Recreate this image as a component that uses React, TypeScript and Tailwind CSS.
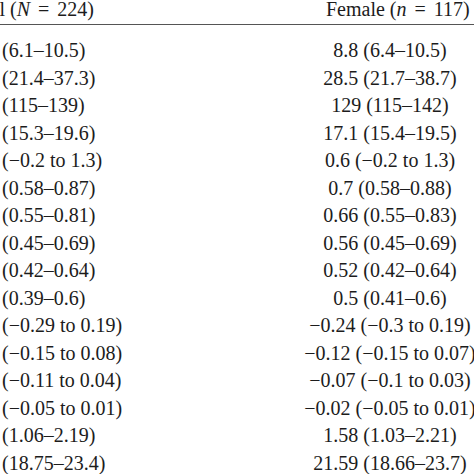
import React from 'react';

const rows: [string, string][] = [
	['(6.1–10.5)', '8.8 (6.4–10.5)'],
	['(21.4–37.3)', '28.5 (21.7–38.7)'],
	['(115–139)', '129 (115–142)'],
	['(15.3–19.6)', '17.1 (15.4–19.5)'],
	['(−0.2 to 1.3)', '0.6 (−0.2 to 1.3)'],
	['(0.58–0.87)', '0.7 (0.58–0.88)'],
	['(0.55–0.81)', '0.66 (0.55–0.83)'],
	['(0.45–0.69)', '0.56 (0.45–0.69)'],
	['(0.42–0.64)', '0.52 (0.42–0.64)'],
	['(0.39–0.6)', '0.5 (0.41–0.6)'],
	['(−0.29 to 0.19)', '−0.24 (−0.3 to 0.19)'],
	['(−0.15 to 0.08)', '−0.12 (−0.15 to 0.07)'],
	['(−0.11 to 0.04)', '−0.07 (−0.1 to 0.03)'],
	['(−0.05 to 0.01)', '−0.02 (−0.05 to 0.01)'],
	['(1.06–2.19)', '1.58 (1.03–2.21)'],
	['(18.75–23.4)', '21.59 (18.66–23.7)'],
];

const Eq = () => <span className="mx-[3px]">=</span>;

const App = () => {
	return (
		<div className="h-[474px] w-[474px] overflow-hidden bg-white font-['Liberation_Serif',serif] text-[20px] leading-[27.5px] text-[#1c1c1c]">
			<div className="-mt-[4px] flex border-b border-[#555] pb-[0.5px] whitespace-nowrap">
				<div className="w-[306px] overflow-hidden">
					<span className="-ml-[55px] inline-block">
						Overall (<i>N</i> <Eq /> 224)
					</span>
				</div>
				<div className="pl-[20px]">
					Female (<i>n</i> <Eq /> 117)
				</div>
			</div>

			<div className="pt-[12px]">
				{rows.map(([overall, female], i) => (
					<div key={i} className="grid grid-cols-[306px_168px] whitespace-nowrap">
						<div className="pl-[2px]">{overall}</div>
						<div className="flex justify-center">{female}</div>
					</div>
				))}
			</div>
		</div>
	);
};

export default App;
